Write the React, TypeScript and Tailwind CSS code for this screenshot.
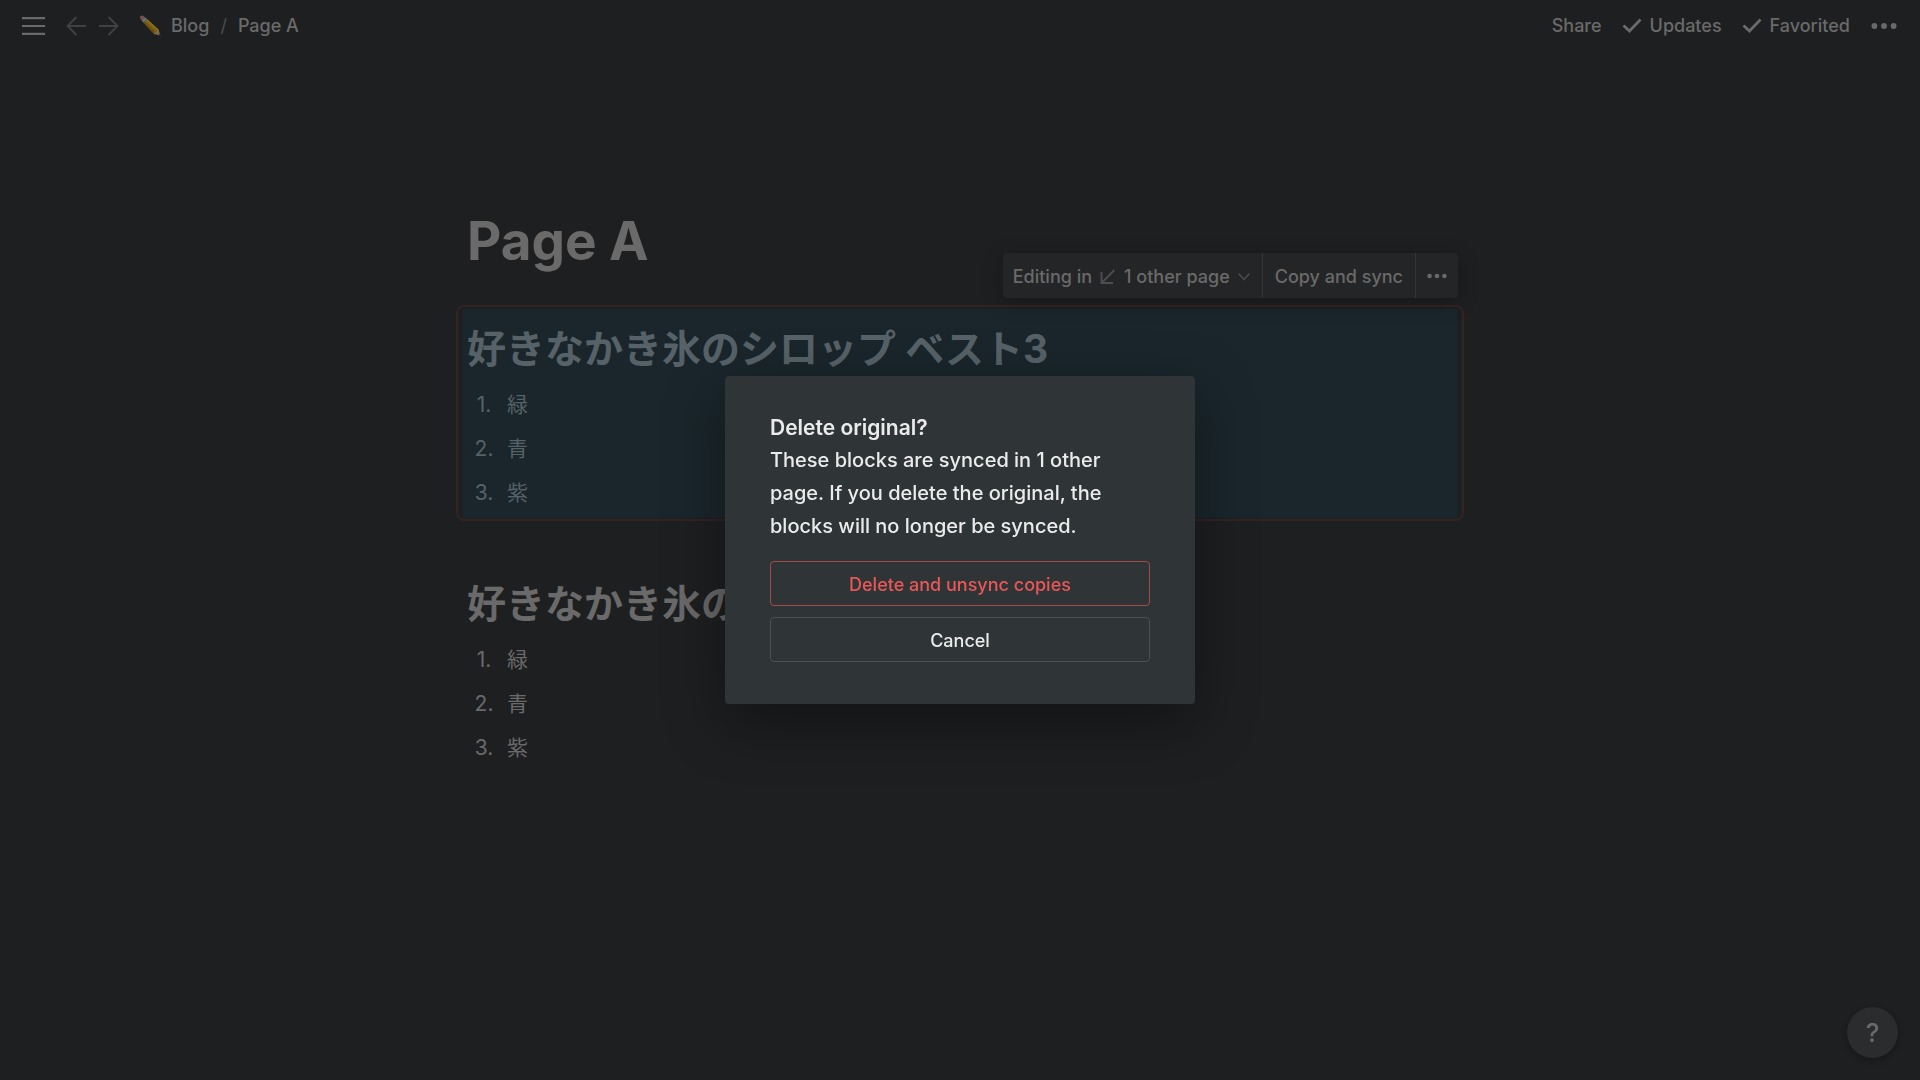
import React from "react";

const items = ["緑", "青", "紫"];
const heading = "好きなかき氷のシロップ ベスト3";

function CheckIcon() {
  return (
    <svg width="20" height="16" viewBox="0 0 20 16" fill="none" stroke="currentColor" strokeWidth="2.8" aria-hidden="true">
      <path d="M1.5 7.5 L7.5 13 L18.5 1.5" />
    </svg>
  );
}

function Dots({ small = false }: { small?: boolean }) {
  return small ? (
    <svg width="20" height="6" viewBox="0 0 20 6" fill="currentColor" aria-hidden="true">
      <circle cx="2.6" cy="3" r="2.3" />
      <circle cx="10" cy="3" r="2.3" />
      <circle cx="17.4" cy="3" r="2.3" />
    </svg>
  ) : (
    <svg width="26" height="6" viewBox="0 0 26 6" fill="currentColor" aria-hidden="true">
      <circle cx="3.4" cy="3" r="2.9" />
      <circle cx="13" cy="3" r="2.9" />
      <circle cx="22.6" cy="3" r="2.9" />
    </svg>
  );
}

function Pencil() {
  return (
    <svg width="22" height="22" viewBox="0 0 22 22" aria-hidden="true">
      <path d="M1.1 2.9 Q0.4 1.4 2 .8 Q3.8 .2 4.9 1.2 L6 2.4 L2.6 5.4 Z" fill="#824b4c" />
      <path d="M2.3 5 L5.6 2 L8.6 4.6 L5 8.2 Z" fill="#4c6173" />
      <path d="M3.2 5.8 L6.6 2.9 L7.4 3.6 L4 6.7 Z" fill="#737b82" />
      <path d="M4.5 7.6 L8.2 4.2 L19.5 14.4 L19.9 15.6 L16.2 19.4 L14.8 18.7 Z" fill="#7d6212" />
      <path d="M4.5 7.6 L5.7 6.5 L17 17.2 L16.2 19.4 L14.8 18.7 Z" fill="#6a500e" />
      <path d="M7 5.3 L8.2 4.2 L19.5 14.4 L18.6 15.4 Z" fill="#8c7020" />
      <path d="M19.5 14.4 L21.5 20.8 L14.8 18.7 L16 17.9 L16.6 16.6 L18.2 16.2 Z" fill="#80694a" />
      <path d="M20.8 18.7 L21.6 21.2 L19.2 20.2 Z" fill="#292a2b" />
    </svg>
  );
}

function Arrow({ right = false }: { right?: boolean }) {
  return (
    <svg width="20" height="20" viewBox="0 0 20 20" fill="none" stroke="currentColor" strokeWidth="1.9" aria-hidden="true">
      <path d={right ? "M0 10 H18 M9.5 1 L18.5 10 L9.5 19" : "M20 10 H2 M10.5 1 L1.5 10 L10.5 19"} />
    </svg>
  );
}

function Blocks() {
  return (
    <>
      <h2 className="text-[39px] leading-[52px] font-bold whitespace-nowrap">{heading}</h2>
      <ol className="mt-2">
        {items.map((item, i) => (
          <li key={item} className="flex h-11 items-center text-[21px] leading-8">
            <span className="w-[34px] text-center">{i + 1}.</span>
            <span className="ml-1.5">{item}</span>
          </li>
        ))}
      </ol>
    </>
  );
}

export default function App() {
  return (
    <div className="relative min-h-screen bg-[#1e1f21] font-[Inter,'Noto_Sans_CJK_JP',sans-serif] text-[#6a6a6a]">
      <header className="flex h-[52px] items-center justify-between pr-[23px] pl-[22px] text-[18px] leading-7 font-medium">
        <nav className="flex items-center" aria-label="Breadcrumb">
          <button aria-label="Open sidebar">
            <svg width="23" height="18" viewBox="0 0 23 18" fill="currentColor" aria-hidden="true">
              <path d="M0 0h23v2.2H0zM0 7.9h23v2.2H0zM0 15.8h23V18H0z" />
            </svg>
          </button>
          <button aria-label="Back" className="ml-[21px] text-[#404143]"><Arrow /></button>
          <button aria-label="Forward" className="ml-[13px] text-[#404143]"><Arrow right /></button>
          <a href="#blog" className="ml-5 flex items-center gap-2.5"><Pencil />Blog</a>
          <span className="mx-[11px] font-normal text-[#4c4d4e]">/</span>
          <a href="#page-a">Page A</a>
        </nav>
        <div className="flex items-center">
          <button>Share</button>
          <button className="ml-5 flex items-center gap-2"><CheckIcon />Updates</button>
          <button className="ml-5 flex items-center gap-2"><CheckIcon />Favorited</button>
          <button aria-label="More options" className="ml-[21px]"><Dots /></button>
        </div>
      </header>

      <main className="mx-auto max-w-[1008px] pt-[155px]">
        <h1 className="pl-[11px] text-[53px] leading-[68px] font-bold">Page A</h1>

        <section className="relative mt-[30px] rounded-lg border-2 border-[#342323] px-[5px] pt-0.5 pb-px">
          <div className="bg-[#1a262c] pt-3.5 pb-[3px] pl-1 text-[#566268]">
            <Blocks />
          </div>
          <div className="absolute -top-[54px] right-1 flex h-[45px] rounded bg-[#242527] text-[18px] leading-7 font-medium shadow-[0_4px_20px_rgba(0,0,0,0.25)]">
            <button className="flex items-center pt-0.5 pr-3 pl-2.5">
              Editing in
              <svg className="mx-2 text-[#4c4d4e]" width="16" height="16" viewBox="0 0 16 16" fill="none" stroke="currentColor" strokeWidth="2" aria-hidden="true">
                <path d="M1.5 3 V14 H13 M2 13.5 L14.5 1" />
              </svg>
              1 other page
              <svg className="ml-2 text-[#4c4d4e]" width="12" height="8" viewBox="0 0 12 8" fill="none" stroke="currentColor" strokeWidth="1.5" aria-hidden="true">
                <path d="M.7 .8 L6 6.5 L11.3 .8" />
              </svg>
            </button>
            <button className="border-l border-[#343537] px-3 pt-0.5">Copy and sync</button>
            <button aria-label="Block options" className="border-l border-[#343537] px-[11px]"><Dots small /></button>
          </div>
        </section>

        <section className="mt-[57px] pl-[11px]">
          <Blocks />
        </section>
      </main>

      <button aria-label="Help" className="fixed right-[22px] bottom-[22px] size-[51px] rounded-full bg-[#2b2c2e] text-[26px] font-medium shadow-[0_2px_6px_rgba(0,0,0,0.3)]">
        ?
      </button>

      <div className="fixed inset-0 flex items-center justify-center">
        <div role="dialog" aria-modal="true" aria-labelledby="dialog-title" className="w-[470px] rounded bg-[#2f3437] px-[45px] pt-[35px] pb-[42px] text-[#ebebeb] shadow-[0_18px_60px_rgba(0,0,0,0.4)]">
          <h2 id="dialog-title" className="text-[21px] leading-[33px] font-semibold">Delete original?</h2>
          <p className="text-[20px] leading-[33px] font-medium">
            These blocks are synced in 1 other page. If you delete the original, the blocks will no longer be synced.
          </p>
          <div className="mt-[18px] flex flex-col gap-[11px] text-[18px] leading-7 font-medium">
            <button className="h-[45px] rounded border border-[#a34a4b] pt-0.5 text-[#eb5757]">Delete and unsync copies</button>
            <button className="h-[45px] rounded border border-[#4b5053] pt-0.5">Cancel</button>
          </div>
        </div>
      </div>
    </div>
  );
}
